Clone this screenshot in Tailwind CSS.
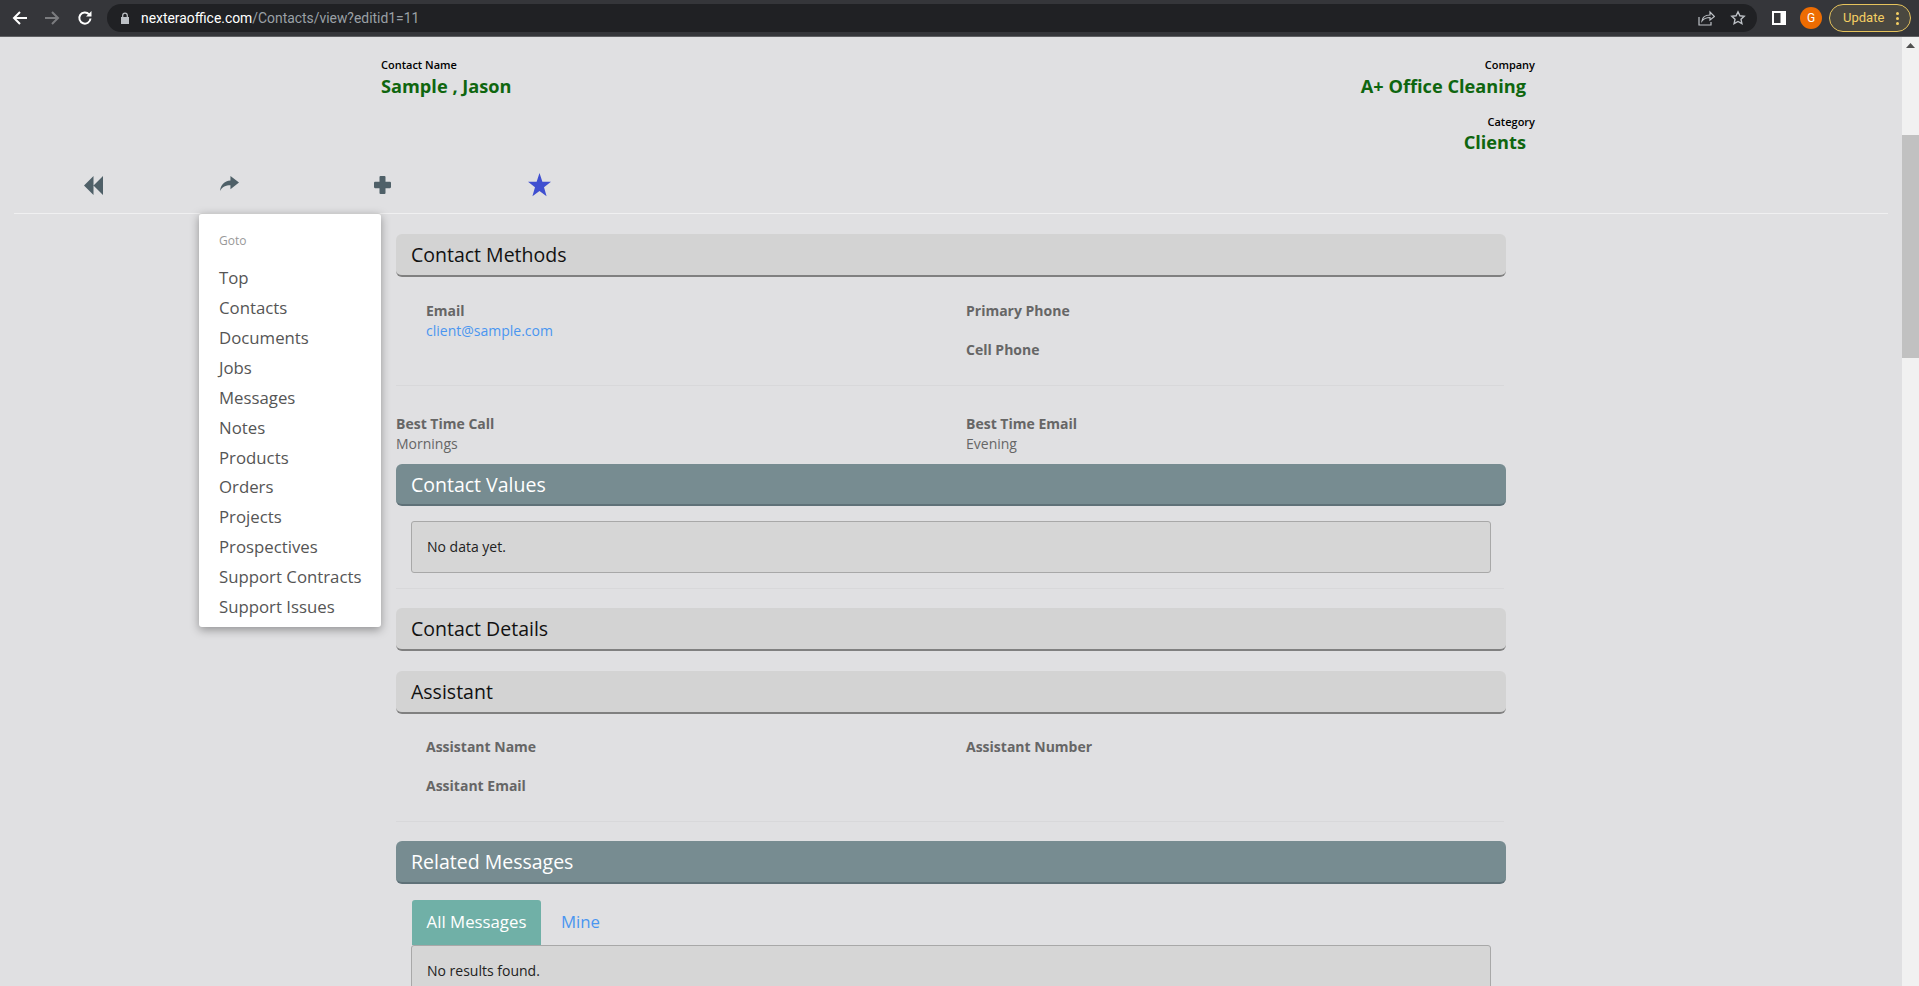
<!DOCTYPE html>
<html lang="en">
<head>
    <meta charset="UTF-8">
    <meta name="viewport" content="width=device-width, initial-scale=1.0">
    <script src="https://cdn.jsdelivr.net/npm/@tailwindcss/browser@4"></script>
    <title>Contacts</title>
</head>
<body class="h-[986px] overflow-hidden bg-[#e0e0e2] font-['Open_Sans',sans-serif] text-[14px] text-[#666]">
    <!-- Browser toolbar -->
    <header class="h-[37px] bg-[#35363a] border-b border-[#5f6063] flex items-center">
        <svg class="ml-[12px] w-[16px] h-[16px]" viewBox="0 0 16 16" fill="none" stroke="#fff" stroke-width="2"><path d="M15 8H2M8 2L2 8l6 6"/></svg>
        <svg class="ml-[16px] w-[16px] h-[16px]" viewBox="0 0 16 16" fill="none" stroke="#7b7c7f" stroke-width="2"><path d="M1 8h13M8 2l6 6-6 6"/></svg>
        <svg class="ml-[17px] w-[16px] h-[16px]" viewBox="0 0 16 16" fill="none" stroke="#fff" stroke-width="2"><path d="M13.5 8.5a5.6 5.6 0 1 1-1.4-4.2"/><path d="M14.5 1v5.5H9" fill="#fff" stroke="none"/></svg>
        <div class="ml-[14px] w-[1650px] h-[28px] rounded-full bg-[#202124] flex items-center">
            <svg class="ml-[13px] w-[10px] h-[12px]" viewBox="0 0 10 12" fill="#bdc1c6"><path d="M1 5h8v7H1z"/><path d="M2.7 5V3.4a2.3 2.3 0 0 1 4.6 0V5" fill="none" stroke="#bdc1c6" stroke-width="1.2"/></svg>
            <span class="ml-[11px] font-['Roboto',sans-serif] text-[13.9px] text-white">nexteraoffice.com<span class="text-[#9aa0a6]">/Contacts/view?editid1=11</span></span>
            <svg class="ml-auto w-[17px] h-[16px]" viewBox="0 0 17 16" fill="none" stroke="#bdc1c6" stroke-width="1.2"><path d="M1 7v8h12v-3"/><path d="M4 11c.5-4 3.5-6 8-6V2l4.500 4.500L12 10V7.500c-3.500 0-6 1-8 3.500z"/></svg>
            <svg class="ml-[15px] mr-[11px] w-[16px] h-[16px]" viewBox="0 0 16 16" fill="none" stroke="#bdc1c6" stroke-width="1.4"><path d="M8 1.800l1.900 4 4.300.5-3.200 3 .9 4.300L8 11.500l-3.900 2.100.9-4.300-3.200-3 4.300-.5z"/></svg>
        </div>
        <svg class="ml-[15px] w-[14px] h-[14px]" viewBox="0 0 14 14"><path fill="#fff" d="M0 0h14v14H0z"/><path fill="#35363a" d="M2 2h6.500v10H2z"/></svg>
        <div class="ml-[14px] w-[22px] h-[22px] rounded-full bg-[#ed6c02] text-white text-[12px] flex items-center justify-center font-['Roboto',sans-serif]">G</div>
        <div class="ml-[7px] w-[82px] h-[28px] rounded-full border border-[#e6c35c] bg-[#4a4840] flex items-center pl-[13px] font-['Roboto',sans-serif] text-[13px] text-[#f5cf63]">
            Update
            <div class="ml-auto mr-[11px] flex flex-col gap-[2px]">
                <div class="w-[3px] h-[3px] rounded-full bg-[#f5cf63]"></div>
                <div class="w-[3px] h-[3px] rounded-full bg-[#f5cf63]"></div>
                <div class="w-[3px] h-[3px] rounded-full bg-[#f5cf63]"></div>
            </div>
        </div>
    </header>

    <div class="flex h-[949px]">
        <main class="relative flex-1 overflow-hidden">
            <!-- Record summary -->
            <div class="flex justify-between pl-[381px] pr-[367px] h-[126px]">
                <div class="pt-[20px]">
                    <div class="text-[11px] font-semibold leading-[16px] text-black">Contact Name</div>
                    <div class="text-[18.2px] font-bold leading-[25px] text-[#0f660f] mt-[1px]">Sample , Jason</div>
                </div>
                <div class="pt-[20px] text-right">
                    <div class="text-[11px] font-semibold leading-[16px] text-black">Company</div>
                    <div class="text-[18.2px] font-bold leading-[25px] text-[#0f660f] mr-[9px] mt-[1px]">A+ Office Cleaning</div>
                    <div class="text-[11px] font-semibold leading-[16px] text-black mt-[15px]">Category</div>
                    <div class="text-[18.2px] font-bold leading-[25px] text-[#0f660f] mr-[9px]">Clients</div>
                </div>
            </div>

            <!-- Actions -->
            <div class="flex items-center h-[50px] pb-[6px] pl-[84px]">
                <svg class="w-[19px] h-[19px]" viewBox="0 0 21 20" fill="#4f6068" preserveAspectRatio="none"><path d="M10.500 0v20L0 10zM21 0v20L10.500 10z"/></svg>
                <svg class="ml-[117px] w-[19px] h-[15px] -mt-[4px]" viewBox="0 0 20 17" fill="#4f6068" preserveAspectRatio="none"><path d="M11 0l9 7.500-9 7.500v-4.500C6 10.500 2.500 12 0 17c.5-7 4.500-11.500 11-12z"/></svg>
                <svg class="ml-[135px] w-[17px] h-[18px]" viewBox="0 0 17 17" fill="#4f6068" preserveAspectRatio="none"><path d="M5.500 1a1 1 0 0 1 1-1h4a1 1 0 0 1 1 1v4.500H16a1 1 0 0 1 1 1v4a1 1 0 0 1-1 1h-4.500V16a1 1 0 0 1-1 1h-4a1 1 0 0 1-1-1v-4.500H1a1 1 0 0 1-1-1v-4a1 1 0 0 1 1-1h4.500z"/></svg>
                <svg class="ml-[137px] w-[23px] h-[24px]" viewBox="0 0 24 24" fill="#3f4fd0" preserveAspectRatio="none"><path d="M12 0l3 8.700h9l-7.300 5.500 2.700 9L12 18l-7.400 5.200 2.700-9L0 8.700h9z"/></svg>
            </div>
            <div class="ml-[14px] mr-[14px] border-t border-[#f0f0f1]"></div>

            <!-- Goto menu -->
            <nav class="absolute left-[199px] top-[176px] w-[182px] h-[414px] bg-white rounded-[3px] border-t border-[#ccc] shadow-[0_3px_10px_rgba(0,0,0,0.35)] pl-[20px] pt-[19px] text-[16.8px] text-[#555]">
                <div class="text-[12px] leading-[16px] text-[#999] mb-[14px]">Goto</div>
                <a class="block leading-[30px]">Top</a>
                <a class="block leading-[30px]">Contacts</a>
                <a class="block leading-[30px]">Documents</a>
                <a class="block leading-[30px]">Jobs</a>
                <a class="block leading-[30px]">Messages</a>
                <a class="block leading-[30px]">Notes</a>
                <a class="block leading-[30px]">Products</a>
                <a class="block leading-[30px] -mt-[1px]">Orders</a>
                <a class="block leading-[30px]">Projects</a>
                <a class="block leading-[30px]">Prospectives</a>
                <a class="block leading-[30px]">Support Contracts</a>
                <a class="block leading-[30px]">Support Issues</a>
            </nav>

            <!-- Detail column -->
            <div class="ml-[396px] w-[1110px] pt-[20px]">
                <h2 class="h-[43px] rounded-[6px] bg-[#d3d3d3] border-b-2 border-[#808080] pl-[15px] text-[19.5px] leading-[41px] text-[#111]">Contact Methods</h2>
                <div class="grid grid-cols-[540px_1fr] mr-[2px] pl-[30px] pt-[24px] h-[109px] leading-[20px] border-b border-[#d8d8da]">
                    <div>
                        <div class="font-bold">Email</div>
                        <div class="text-[#4a96f0]">client@sample.com</div>
                    </div>
                    <div>
                        <div class="font-bold">Primary Phone</div>
                        <div class="font-bold mt-[19px]">Cell Phone</div>
                    </div>
                </div>
                <div class="grid grid-cols-[570px_1fr] pt-[28px] leading-[20px] h-[78px]">
                    <div>
                        <div class="font-bold">Best Time Call</div>
                        <div>Mornings</div>
                    </div>
                    <div>
                        <div class="font-bold">Best Time Email</div>
                        <div>Evening</div>
                    </div>
                </div>

                <h2 class="h-[42px] rounded-[6px] bg-[#778c91] border-b-2 border-[#5f7178] pl-[15px] text-[19.5px] leading-[41px] text-white">Contact Values</h2>
                <div class="mx-[15px] mt-[15px] h-[52px] rounded-[3px] bg-[#d6d6d6] border border-[#a8a8a8] pl-[15px] leading-[50px] text-[#222]">No data yet.</div>
                <div class="mt-[15px] mr-[2px] border-t border-[#d8d8da]"></div>

                <h2 class="mt-[19px] h-[43px] rounded-[6px] bg-[#d3d3d3] border-b-2 border-[#808080] pl-[15px] text-[19.5px] leading-[41px] text-[#111]">Contact Details</h2>
                <h2 class="mt-[20px] h-[43px] rounded-[6px] bg-[#d3d3d3] border-b-2 border-[#808080] pl-[15px] text-[19.5px] leading-[41px] text-[#111]">Assistant</h2>
                <div class="grid grid-cols-[540px_1fr] mr-[2px] pl-[30px] pt-[23px] h-[108px] font-bold leading-[20px] border-b border-[#d8d8da]">
                    <div>
                        <div>Assistant Name</div>
                        <div class="mt-[19px]">Assitant Email</div>
                    </div>
                    <div>Assistant Number</div>
                </div>

                <h2 class="mt-[19px] h-[43px] rounded-[6px] bg-[#778c91] border-b-2 border-[#5f7178] pl-[15px] text-[19.5px] leading-[41px] text-white">Related Messages</h2>
                <div class="flex ml-[16px] mt-[16px] h-[45px] text-[16.8px] leading-[44px]">
                    <div class="w-[129px] rounded-t-[3px] bg-[#70b0a7] text-white text-center">All Messages</div>
                    <div class="ml-[20px] text-[#4a96f0]">Mine</div>
                </div>
                <div class="mx-[15px] h-[80px] rounded-t-[3px] bg-[#d6d6d6] border border-[#a8a8a8] pl-[15px] pt-[15px] leading-[20px] text-[#222]">No results found.</div>
            </div>
        </main>

        <!-- Page scrollbar -->
        <aside class="w-[17px] bg-[#f1f1f1] flex flex-col items-center">
            <svg class="mt-[6px] w-[9px] h-[5px]" viewBox="0 0 9 5" fill="#505050"><path d="M4.500 0L9 5H0z"/></svg>
            <div class="mt-[87px] w-full h-[223px] bg-[#c1c1c1]"></div>
        </aside>
    </div>
</body>
</html>
